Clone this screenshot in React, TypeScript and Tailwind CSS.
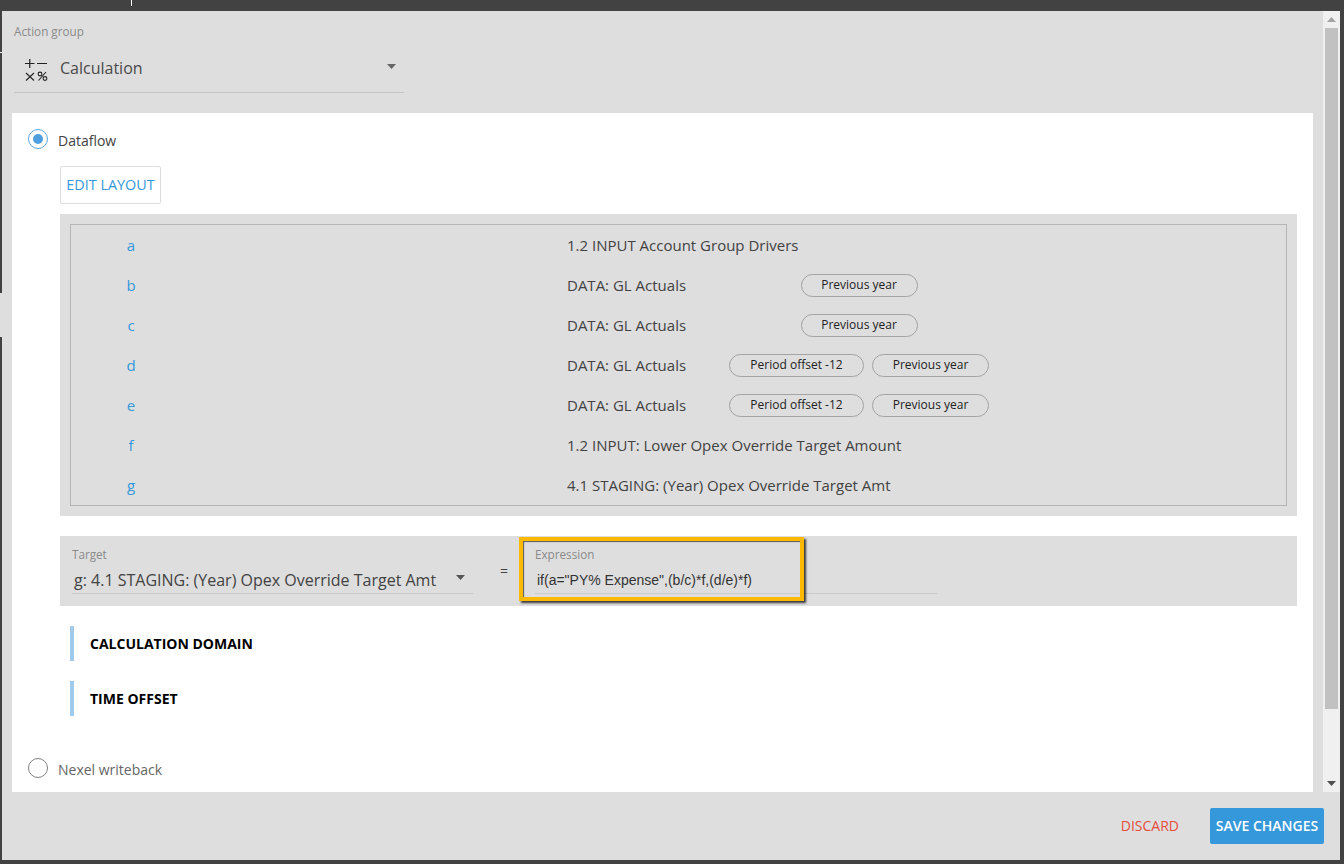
import type { ReactNode } from 'react'

const rows: { key: string; name: string; pills: string[] }[] = [
  { key: 'a', name: '1.2 INPUT Account Group Drivers', pills: [] },
  { key: 'b', name: 'DATA: GL Actuals', pills: ['Previous year'] },
  { key: 'c', name: 'DATA: GL Actuals', pills: ['Previous year'] },
  { key: 'd', name: 'DATA: GL Actuals', pills: ['Period offset -12', 'Previous year'] },
  { key: 'e', name: 'DATA: GL Actuals', pills: ['Period offset -12', 'Previous year'] },
  { key: 'f', name: '1.2 INPUT: Lower Opex Override Target Amount', pills: [] },
  { key: 'g', name: '4.1 STAGING: (Year) Opex Override Target Amt', pills: [] },
]

function CaretDown({ className }: { className?: string }) {
  return (
    <svg width="9" height="5" viewBox="0 0 9 5" className={className}>
      <path d="M0 0h9L4.5 5z" fill="currentColor" />
    </svg>
  )
}

function CalcIcon() {
  return (
    <svg width="23" height="22" viewBox="0 0 23 22" className="text-[#222]">
      <path d="M0 4.5h9.5M4.75 0v9M12 4.5h10" stroke="currentColor" strokeWidth="1.2" fill="none" />
      <path d="M1 14l8 7.5M9 14l-8 7.5" stroke="currentColor" strokeWidth="1.1" fill="none" />
      <circle cx="15" cy="15" r="1.9" stroke="currentColor" strokeWidth="1.1" fill="none" />
      <circle cx="20" cy="19.5" r="1.9" stroke="currentColor" strokeWidth="1.1" fill="none" />
      <path d="M21 13l-7.5 8.5" stroke="currentColor" strokeWidth="1.1" fill="none" />
    </svg>
  )
}

function Radio({ on, children }: { on?: boolean; children: ReactNode }) {
  return (
    <div className="flex items-center h-[20px]">
      <span className={`w-[20px] h-[20px] rounded-full border flex items-center justify-center bg-white ${on ? 'border-[#5aa5e0]' : 'border-[#808080]'}`}>
        {on && <span className="w-[10px] h-[10px] rounded-full bg-[#4f9fe0]" />}
      </span>
      <span className={`ml-[10px] pt-[4px] text-sm ${on ? 'text-[#424242]' : 'text-[#666]'}`}>{children}</span>
    </div>
  )
}

function Pill({ label }: { label: string }) {
  const wide = label.startsWith('Period')
  return (
    <span className={`h-[23px] rounded-full border border-[#a3a3a3] flex items-center justify-center text-xs text-[#222] ${wide ? 'w-[135px]' : 'w-[117px]'}`}>
      {label}
    </span>
  )
}

function Section({ label }: { label: string }) {
  return (
    <div className="h-[35px] border-l-4 border-[#a0cbec] pl-4 flex items-center text-sm font-bold text-black">
      {label}
    </div>
  )
}

export default function App() {
  return (
    <div className="relative w-[1344px] h-[864px] overflow-hidden bg-[#424242] pt-[11px] pl-[2px] font-['Open_Sans',sans-serif]">
      <div className="absolute left-[131px] top-0 w-px h-[6px] bg-white" />
      <div className="absolute left-0 top-[52px] w-[2px] h-px bg-white" />
      <div className="absolute left-0 top-[293px] w-[2px] h-[44px] bg-[#dedede]" />

      <div className="w-[1338px] h-[849px] bg-[#dedede] flex flex-col">
        <div className="h-[781px] flex">
          <div className="w-[1321px] pl-[10px] pr-[10px] flex flex-col">
            <div className="h-[102px] pl-[2px] pt-[12px]">
              <div className="text-[11.7px] leading-[16px] text-[#8a8a8a]">Action group</div>
              <div className="mt-[4px] w-[390px] h-[50px] border-b border-[#c4c4c4] flex items-center">
                <span className="ml-[11px] mt-[5px]"><CalcIcon /></span>
                <span className="ml-[12px] text-base text-[#4a4a4a]">Calculation</span>
                <CaretDown className="ml-auto mr-[8px] mb-[3px] text-[#666]" />
              </div>
            </div>

            <div className="flex-1 bg-white pt-[16px] overflow-hidden">
              <div className="pl-[16px]">
                <Radio on>Dataflow</Radio>
              </div>
              <div className="pl-[48px] pr-[16px] mt-[17px]">
                <button className="w-[101px] h-[38px] border border-[#ddd] rounded-[2px] text-[14.4px] text-[#3498db]">EDIT LAYOUT</button>

                <div className="mt-[10px] bg-[#dedede] p-[10px]">
                  <div className="h-[282px] border border-[#b5b5b5] pt-px">
                    {rows.map(r => (
                      <div key={r.key} className="h-[40px] pb-[2px] flex items-center text-[15px] text-[#424242]">
                        <span className="w-[120px] text-center text-[#3498db]">{r.key}</span>
                        <span className="w-[538px] pl-[376px] whitespace-nowrap">{r.name}</span>
                        <span className="w-[260px] flex justify-center gap-2">
                          {r.pills.map((p, i) => <Pill key={i} label={p} />)}
                        </span>
                      </div>
                    ))}
                  </div>
                </div>

                <div className="relative mt-[20px] h-[70px] bg-[#dedede] flex">
                  <div className="ml-[12px] w-[401px] pt-[10px]">
                    <div className="text-[11.7px] leading-[16px] text-[#8a8a8a]">Target</div>
                    <div className="h-[32px] border-b border-[#c9c9c9] flex items-center pl-[2px] text-base text-[#424242]">
                      <span className="pt-[4px] whitespace-nowrap">g: 4.1 STAGING: (Year) Opex Override Target Amt</span>
                      <CaretDown className="ml-auto mr-[8px] text-[#555]" />
                    </div>
                  </div>
                  <div className="w-[62px] pt-[25px] text-center text-sm leading-[20px] text-[#424242]">=</div>
                  <div className="w-[402px] pt-[10px]">
                    <div className="text-[11.7px] leading-[16px] text-[#8a8a8a]">Expression</div>
                    <div className="h-[32px] border-b border-[#c9c9c9] flex items-center pl-[2px] pt-[4px] text-sm text-[#333] font-['Liberation_Sans',sans-serif]">
                      if(a="PY% Expense",(b/c)*f,(d/e)*f)
                    </div>
                  </div>
                  <div className="absolute left-[459px] top-px w-[285px] h-[64px] border-4 border-[#fdb900] shadow-[2px_2px_2px_rgba(0,0,0,0.75),inset_1px_1px_1px_rgba(0,0,0,0.6)]" />
                </div>

                <div className="pl-[10px] mt-[20px] flex flex-col gap-[20px]">
                  <Section label="CALCULATION DOMAIN" />
                  <Section label="TIME OFFSET" />
                </div>
              </div>

              <div className="pl-[16px] mt-[42px]">
                <Radio>Nexel writeback</Radio>
              </div>
            </div>
          </div>

          <div className="w-[17px] bg-[#f0f0f0] flex flex-col items-center">
            <div className="h-[17px] flex items-center justify-center">
              <CaretDown className="rotate-180 text-[#a3a3a3]" />
            </div>
            <div className="w-[13px] h-[681px] bg-[#c1c1c1]" />
            <div className="mt-auto h-[17px] flex items-center justify-center">
              <CaretDown className="text-[#505050]" />
            </div>
          </div>
        </div>

        <div className="flex-1 flex items-center justify-end pr-[16px]">
          <span className="text-sm text-[#e74c3c] mr-[31px]">DISCARD</span>
          <button className="w-[114px] h-[36px] rounded-[2px] bg-[#3498db] text-sm font-semibold text-white">SAVE CHANGES</button>
        </div>
      </div>
    </div>
  )
}
